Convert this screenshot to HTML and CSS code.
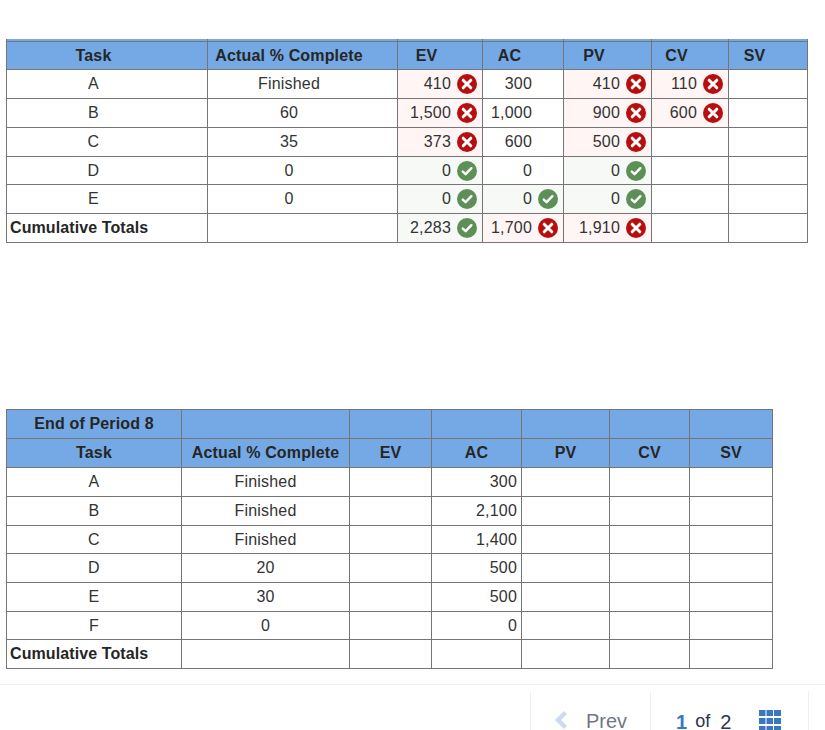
FILE: index.html
```html
<!DOCTYPE html>
<html lang="en">
<head>
<meta charset="utf-8">
<title>Earned value tables</title>
<link rel="stylesheet" href="styles.css">
</head>
<body>
<svg class="defs" width="0" height="0" aria-hidden="true">
  <symbol id="bad" viewBox="0 0 20 20"><circle cx="10" cy="10" r="10" fill="#b70f0f"/><path d="M6.2 6.2l7.6 7.6M13.8 6.2l-7.6 7.6" stroke="#fff" stroke-width="3" stroke-linecap="round" fill="none"/></symbol>
  <symbol id="good" viewBox="0 0 20 20"><circle cx="10" cy="10" r="10" fill="#5d8f57"/><path d="M5.8 10.6l2.8 2.6 5.8-6" stroke="#fff" stroke-width="2.4" stroke-linecap="round" stroke-linejoin="round" fill="none"/></symbol>
</svg>
<main class="page">
<table class="grid first">
  <colgroup><col class="a1"><col class="a2"><col class="a3"><col class="a4"><col class="a5"><col class="a6"><col class="a7"></colgroup>
  <thead>
    <tr class="lip"><th></th><th></th><th></th><th></th><th></th><th></th><th></th></tr>
    <tr class="s"><th>Task</th><th>Actual % Complete</th><th>EV</th><th>AC</th><th>PV</th><th>CV</th><th>SV</th></tr>
  </thead>
  <tbody>
    <tr><td class="c">A</td><td class="c">Finished</td>
      <td class="bad"><span class="v">410<svg class="ic"><use href="#bad"/></svg></span></td>
      <td><span class="v">300<i class="ph"></i></span></td>
      <td class="bad"><span class="v">410<svg class="ic"><use href="#bad"/></svg></span></td>
      <td class="bad"><span class="v">110<svg class="ic"><use href="#bad"/></svg></span></td><td></td></tr>
    <tr><td class="c">B</td><td class="c">60</td>
      <td class="bad"><span class="v">1,500<svg class="ic"><use href="#bad"/></svg></span></td>
      <td><span class="v">1,000<i class="ph"></i></span></td>
      <td class="bad"><span class="v">900<svg class="ic"><use href="#bad"/></svg></span></td>
      <td class="bad"><span class="v">600<svg class="ic"><use href="#bad"/></svg></span></td><td></td></tr>
    <tr><td class="c">C</td><td class="c">35</td>
      <td class="bad"><span class="v">373<svg class="ic"><use href="#bad"/></svg></span></td>
      <td><span class="v">600<i class="ph"></i></span></td>
      <td class="bad"><span class="v">500<svg class="ic"><use href="#bad"/></svg></span></td>
      <td></td><td></td></tr>
    <tr class="s"><td class="c">D</td><td class="c">0</td>
      <td class="good"><span class="v">0<svg class="ic"><use href="#good"/></svg></span></td>
      <td><span class="v">0<i class="ph"></i></span></td>
      <td class="good"><span class="v">0<svg class="ic"><use href="#good"/></svg></span></td>
      <td></td><td></td></tr>
    <tr><td class="c">E</td><td class="c">0</td>
      <td class="good"><span class="v">0<svg class="ic"><use href="#good"/></svg></span></td>
      <td class="good"><span class="v">0<svg class="ic"><use href="#good"/></svg></span></td>
      <td class="good"><span class="v">0<svg class="ic"><use href="#good"/></svg></span></td>
      <td></td><td></td></tr>
    <tr><td class="b">Cumulative Totals</td><td></td>
      <td class="good"><span class="v">2,283<svg class="ic"><use href="#good"/></svg></span></td>
      <td class="bad"><span class="v">1,700<svg class="ic"><use href="#bad"/></svg></span></td>
      <td class="bad"><span class="v">1,910<svg class="ic"><use href="#bad"/></svg></span></td>
      <td></td><td></td></tr>
  </tbody>
</table>
<table class="grid second">
  <colgroup><col class="b1"><col class="b2"><col class="b3"><col class="b4"><col class="b5"><col class="b6"><col class="b7"></colgroup>
  <thead>
    <tr><th>End of Period 8</th><th></th><th></th><th></th><th></th><th></th><th></th></tr>
    <tr><th>Task</th><th>Actual % Complete</th><th>EV</th><th>AC</th><th>PV</th><th>CV</th><th>SV</th></tr>
  </thead>
  <tbody>
    <tr><td class="c">A</td><td class="c">Finished</td><td></td><td class="r">300</td><td></td><td></td><td></td></tr>
    <tr><td class="c">B</td><td class="c">Finished</td><td></td><td class="r">2,100</td><td></td><td></td><td></td></tr>
    <tr class="s"><td class="c">C</td><td class="c">Finished</td><td></td><td class="r">1,400</td><td></td><td></td><td></td></tr>
    <tr><td class="c">D</td><td class="c">20</td><td></td><td class="r">500</td><td></td><td></td><td></td></tr>
    <tr><td class="c">E</td><td class="c">30</td><td></td><td class="r">500</td><td></td><td></td><td></td></tr>
    <tr class="s"><td class="c">F</td><td class="c">0</td><td></td><td class="r">0</td><td></td><td></td><td></td></tr>
    <tr><td class="b">Cumulative Totals</td><td></td><td></td><td></td><td></td><td></td><td></td></tr>
  </tbody>
</table>
<nav class="pager">
  <div class="seg prev">
    <svg class="chev" width="14" height="20" viewBox="0 0 14 20"><path d="M11.5 2.5L4 10l7.5 7.5" stroke="#cbdaee" stroke-width="4.4" fill="none"/></svg>
    <span>Prev</span>
  </div>
  <div class="seg count">
    <span class="cur">1</span><span class="of">of</span><span class="tot">2</span>
    <svg class="apps" width="23" height="22" viewBox="0 0 23 22" fill="#3a78bf"><rect x="1" y="0" width="6.5" height="6"/><rect x="8.5" y="0" width="6.5" height="6"/><rect x="16" y="0" width="7" height="6"/><rect x="1" y="8" width="6.5" height="6"/><rect x="8.5" y="8" width="6.5" height="6"/><rect x="16" y="8" width="7" height="6"/><rect x="1" y="16" width="6.5" height="6"/><rect x="8.5" y="16" width="6.5" height="6"/><rect x="16" y="16" width="7" height="6"/></svg>
  </div>
</nav>
</main>
</body>
</html>
```
FILE: styles.css
```css
html, body { margin: 0; padding: 0; background: #fff; }
body { height: 730px; overflow: hidden; font-family: "Liberation Sans", Arial, sans-serif; font-size: 16px; color: #333; }
.defs { position: absolute; }
.page { padding-top: 39px; }
.grid { border-collapse: collapse; table-layout: fixed; margin-left: 6px; font-size: 16px; letter-spacing: 0.2px; }
.grid th, .grid td { border: 1px solid #757575; height: 28px; padding: 0 4px; box-sizing: content-box; line-height: 20px; }
.grid th { background: #75a9e5; color: #262626; font-weight: 700; text-align: center; letter-spacing: 0.15px; }
.grid .s th, .grid .s td { height: 27px; }
.grid .lip th { height: 2px; line-height: 2px; font-size: 0; padding: 0; border-top: 0; border-bottom: 1px solid #757575; }
.first { width: 802px; }
.first th, .first .c { padding-right: 31px; }
.first td { padding-right: 5px; }
.second { width: 767px; margin-top: 166px; }
.a1 { width: 201px; } .a2 { width: 190px; } .a3 { width: 85px; } .a4 { width: 81px; } .a5 { width: 88px; } .a6 { width: 77px; } .a7 { width: 79px; }
.b1 { width: 175px; } .b2 { width: 168px; } .b3 { width: 82px; } .b4 { width: 90px; } .b5 { width: 88px; } .b6 { width: 80px; } .b7 { width: 83px; }
.c { text-align: center; }
.r { text-align: right; }
.grid .b { font-weight: 700; color: #262626; padding-left: 3px; letter-spacing: 0.1px; }
.bad { background: #fff5f4; }
.good { background: #f6f9f6; }
.v { display: flex; align-items: center; justify-content: flex-end; gap: 6px; }
.ic { width: 20px; height: 20px; flex: none; }
.ph { width: 20px; height: 20px; flex: none; }
.pager { display: flex; margin-top: 15px; padding: 6px 0 0 530px; border-top: 1px solid #f0f0f0; height: 40px; color: #6f7785; }
.seg { display: flex; align-items: flex-start; border-left: 1px solid #f0f0f0; height: 40px; box-sizing: border-box; }
.prev { width: 120px; padding: 19px 0 0 23px; gap: 18px; font-size: 20px; }
.count { width: 159px; padding: 20px 0 0 25px; border-right: 1px solid #f0f0f0; color: #2a3550; font-size: 18px; }
.cur { color: #3a78bf; font-weight: 700; font-size: 20px; }
.of { margin-left: 8px; }
.tot { margin-left: 10px; font-size: 20px; line-height: 22px; }
.apps { margin-left: 27px; margin-top: -1px; }
```
